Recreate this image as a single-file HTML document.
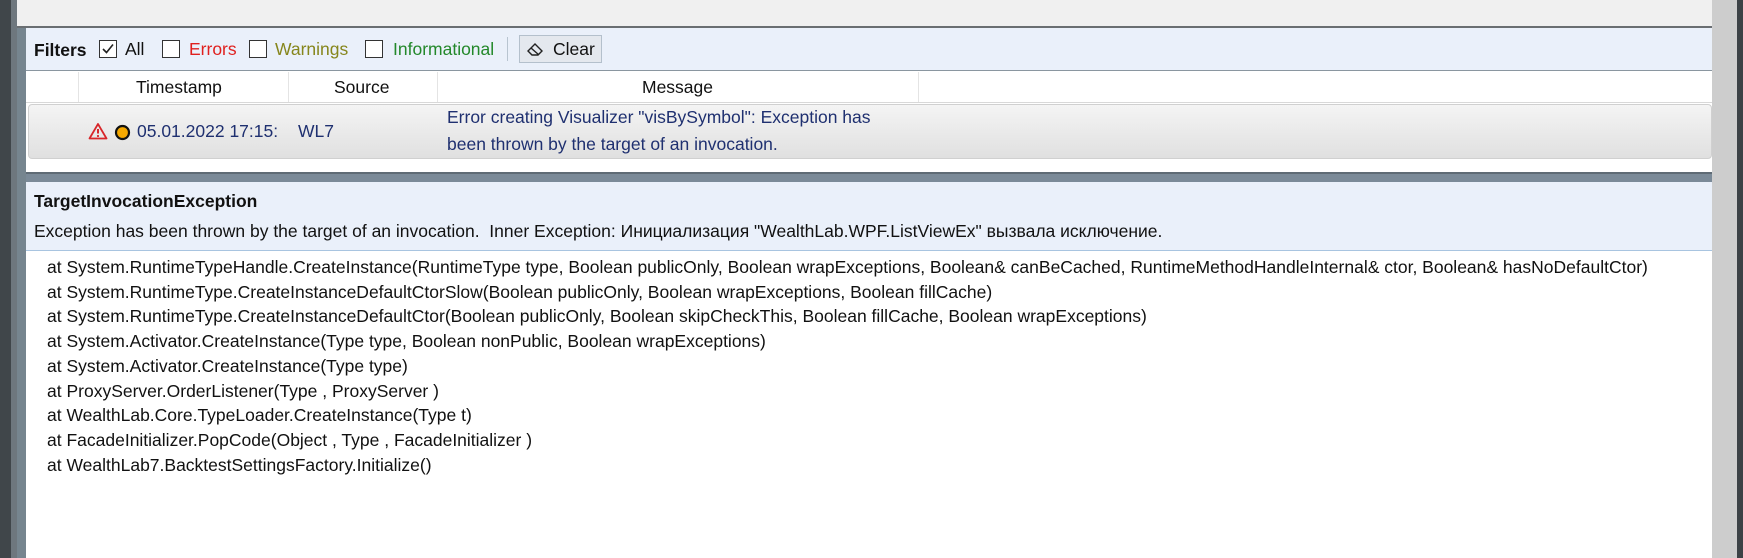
<!DOCTYPE html>
<html><head><meta charset="utf-8"><style>
*{margin:0;padding:0;box-sizing:border-box}
body{width:1743px;height:558px;overflow:hidden;background:#3c4246;font-family:"Liberation Sans","Noto Sans CJK SC",sans-serif;font-size:17.5px;color:#111;position:relative}
.abs{position:absolute;white-space:nowrap}
</style></head><body>
<div class="abs" style="left:0;top:0;width:11px;height:558px;background:#40464a"></div>
<div class="abs" style="left:11px;top:0;width:6px;height:558px;background:#6e777e"></div>
<div class="abs" style="left:17px;top:0;width:9px;height:558px;background:#76858f"></div>
<div class="abs" style="left:1712px;top:0;width:25px;height:558px;background:#cdcdcd"></div>
<div class="abs" style="left:1737px;top:0;width:6px;height:558px;background:#3c4246"></div>
<!-- top -->
<div class="abs" style="left:17px;top:0;width:1695px;height:27px;background:#f0f0f0"></div>
<div class="abs" style="left:17px;top:26px;width:1695px;height:2px;background:#6a6e72"></div>
<!-- filter bar -->
<div class="abs" style="left:26px;top:28px;width:1686px;height:42px;background:#eaf0fa"></div>
<div class="abs" style="left:26px;top:70px;width:1686px;height:1px;background:#8a96a0"></div>
<div class="abs" style="left:34px;top:40px;font-weight:bold">Filters</div>
<div class="abs" style="left:99px;top:40px;width:18px;height:18px;border:1px solid #333;background:#fff"><svg width="16" height="16" style="position:absolute;left:0;top:0"><path d="M3 8 L6.5 11.5 L13 3.5" fill="none" stroke="#222" stroke-width="1.6"/></svg></div>
<div class="abs" style="left:125px;top:39px">All</div>
<div class="abs" style="left:162px;top:40px;width:18px;height:18px;border:1px solid #333;background:#fff"></div>
<div class="abs" style="left:189px;top:39px;color:#e0201e">Errors</div>
<div class="abs" style="left:249px;top:40px;width:18px;height:18px;border:1px solid #333;background:#fff"></div>
<div class="abs" style="left:275px;top:39px;color:#86861c">Warnings</div>
<div class="abs" style="left:365px;top:40px;width:18px;height:18px;border:1px solid #333;background:#fff"></div>
<div class="abs" style="left:393px;top:39px;color:#23882a">Informational</div>
<div class="abs" style="left:507px;top:37px;width:1px;height:24px;background:#b8c4d0"></div>
<div class="abs" style="left:519px;top:35px;width:83px;height:28px;background:#e4e8ee;border:1px solid #b4c0cc"></div>
<svg class="abs" style="left:526px;top:41px" width="18" height="16"><path d="M2 10 L9 3 L16 10 L12 14 L6 14 Z M5 7 L13 14" fill="none" stroke="#222" stroke-width="1.4"/></svg>
<div class="abs" style="left:553px;top:39px">Clear</div>
<!-- list -->
<div class="abs" style="left:26px;top:71px;width:1686px;height:101px;background:#fff"></div>
<div class="abs" style="left:78px;top:72px;width:1px;height:30px;background:#e4e4e4"></div>
<div class="abs" style="left:288px;top:72px;width:1px;height:30px;background:#e4e4e4"></div>
<div class="abs" style="left:437px;top:72px;width:1px;height:30px;background:#e4e4e4"></div>
<div class="abs" style="left:918px;top:72px;width:1px;height:30px;background:#e4e4e4"></div>
<div class="abs" style="left:26px;top:102px;width:1686px;height:1px;background:#d8d8d8"></div>
<div class="abs" style="left:136px;top:77px">Timestamp</div>
<div class="abs" style="left:334px;top:77px">Source</div>
<div class="abs" style="left:642px;top:77px">Message</div>
<div class="abs" style="left:28px;top:104px;width:1684px;height:55px;border:1px solid #d0d0d0;border-radius:4px;background:linear-gradient(#f4f4f4,#ececec 40%,#e0e0e0)"></div>
<svg class="abs" style="left:88px;top:122px" width="20" height="18"><path d="M10 2 L18.5 16.5 L1.5 16.5 Z" fill="none" stroke="#d8262a" stroke-width="1.8" stroke-linejoin="round"/><path d="M10 7 L10 11.5" stroke="#d8262a" stroke-width="2"/><circle cx="10" cy="14" r="1.1" fill="#d8262a"/></svg>
<svg class="abs" style="left:114px;top:124px" width="17" height="17"><circle cx="8.5" cy="8.5" r="6.5" fill="#f5a800" stroke="#111" stroke-width="2.2"/></svg>
<div class="abs" style="left:137px;top:121px;color:#1f3070">05.01.2022 17:15:</div>
<div class="abs" style="left:298px;top:121px;color:#1f3070">WL7</div>
<div class="abs" style="left:447px;top:107px;color:#1f3070">Error creating Visualizer "visBySymbol": Exception has</div>
<div class="abs" style="left:447px;top:134px;color:#1f3070">been thrown by the target of an invocation.</div>
<!-- separator -->
<div class="abs" style="left:26px;top:172px;width:1686px;height:2px;background:#5f6b75"></div>
<div class="abs" style="left:26px;top:174px;width:1686px;height:8px;background:#7b8a98"></div>
<!-- detail -->
<div class="abs" style="left:26px;top:182px;width:1686px;height:68px;background:#eaf0fa"></div>
<div class="abs" style="left:26px;top:250px;width:1686px;height:1px;background:#a8c4e0"></div>
<div class="abs" style="left:26px;top:251px;width:1686px;height:307px;background:#fff"></div>
<div class="abs" style="left:34px;top:191px;font-weight:bold">TargetInvocationException</div>
<div class="abs" style="left:34px;top:221px">Exception has been thrown by the target of an invocation.&nbsp; Inner Exception: Инициализация "WealthLab.WPF.ListViewEx" вызвала исключение.</div>
<div class="abs" style="left:47px;top:255px;line-height:24.7px">at System.RuntimeTypeHandle.CreateInstance(RuntimeType type, Boolean publicOnly, Boolean wrapExceptions, Boolean&amp; canBeCached, RuntimeMethodHandleInternal&amp; ctor, Boolean&amp; hasNoDefaultCtor)<br>at System.RuntimeType.CreateInstanceDefaultCtorSlow(Boolean publicOnly, Boolean wrapExceptions, Boolean fillCache)<br>at System.RuntimeType.CreateInstanceDefaultCtor(Boolean publicOnly, Boolean skipCheckThis, Boolean fillCache, Boolean wrapExceptions)<br>at System.Activator.CreateInstance(Type type, Boolean nonPublic, Boolean wrapExceptions)<br>at System.Activator.CreateInstance(Type type)<br>at ProxyServer.OrderListener(Type , ProxyServer )<br>at WealthLab.Core.TypeLoader.CreateInstance(Type t)<br>at FacadeInitializer.PopCode(Object , Type , FacadeInitializer )<br>at WealthLab7.BacktestSettingsFactory.Initialize()</div>
</body></html>
